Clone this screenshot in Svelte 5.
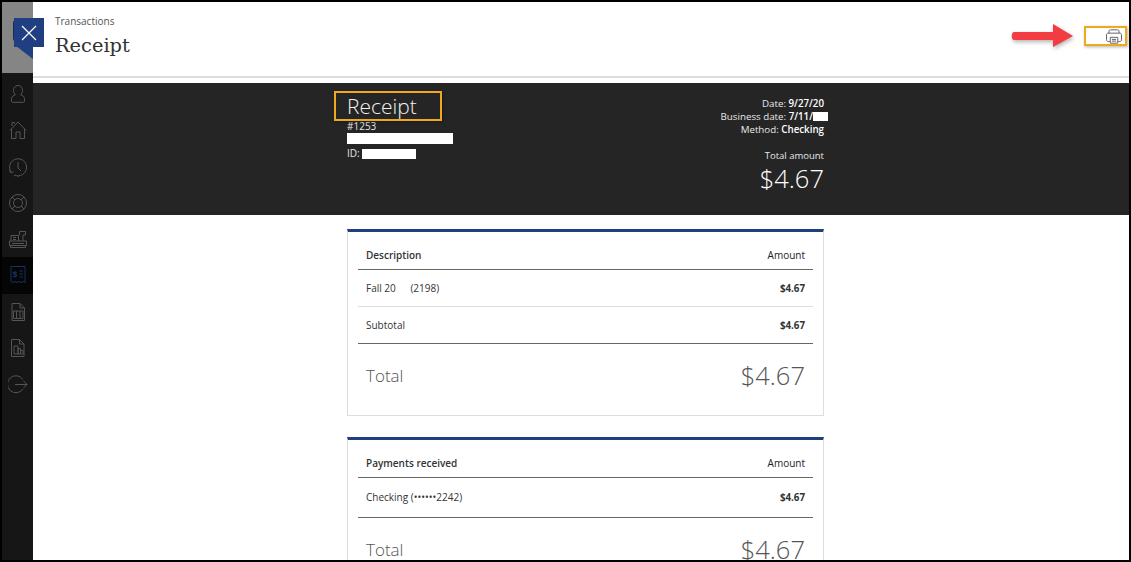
<script>
	const nav = ['user', 'home', 'clock', 'ring', 'register', 'bill', 'calc', 'report', 'exit']
</script>

<div class="frame">
	<aside class="rail">
		<div class="rail-top"></div>
		<ul>
			{#each nav as item}
				<li class:active={item === 'bill'}>
					<svg viewBox="0 0 20 20" width="20" height="20" fill="none" stroke="currentColor" stroke-width="1">
						{#if item === 'user'}
							<path d="M10 1.500c-3 0-4.500 2.200-4.500 4.800 0 2 .8 3.500 2 4.500-2 .7-4 1.500-4 4v2.500c0 .6.400 1 1 1h11c.6 0 1-.4 1-1v-2.500c0-2.500-2-3.300-4-4 1.200-1 2-2.500 2-4.500 0-2.600-1.500-4.800-4.500-4.800z" />
						{:else if item === 'home'}
							<path d="M2 10.500 10 2l8 8.500M3.500 9v9.500h4.500V12h4v6.500h4.500V9M4 6V2.500h2.500v1" />
						{:else if item === 'clock'}
							<path d="M3 15a8.500 8.500 0 1 1 3.500 3" />
							<path d="M10 5v6l3 3M6 18.500l1 .5M9.500 19.500h1" />
							<path d="M1.500 13.500 3 16l2.500-1.500" />
						{:else if item === 'ring'}
							<circle cx="10" cy="10" r="8.500" />
							<circle cx="10" cy="10" r="4.500" />
							<path d="m4 4 3 3M16 4l-3 3M4 16l3-3M16 16l-3-3" />
						{:else if item === 'register'}
							<path d="M3 12V6.500h7.500V12M11.500 6V2.500h6V6h-2.500v6M1.500 12h17v4.500h-17zM2.500 16.500v2h15v-2M5 8.500h3M5 10.500h3M4 14.500h12" />
						{:else if item === 'bill'}
							<path d="M3 1.500h14v16l-2-1-2 1-2-1-2 1-2-1-2 1-2-1z" />
							<path d="M11.500 6H15M11.500 9H15M11.500 12H15" />
							<text x="4.500" y="13" class="dollar">$</text>
						{:else if item === 'calc'}
							<path d="M4 1.500h8l4.500 4.500v12.500H4zM12 1.500V6h4.500M5.500 9h9.500v7.500H5.500zM8.500 9v7.500M12 9v7.500" />
						{:else if item === 'report'}
							<path d="M3.500 1.500h8l4.500 4.500v12.500h-12.500zM11.500 1.500V6H16M6 8h4v8H6zM10 10.500h2.500V16H10zM12.500 12.500H15V16h-2.500z" />
						{:else}
							<path d="M15 5.500A8.500 8.500 0 1 0 15 15" />
							<path d="M7 10.500h12M15.500 7l3.500 3.500-3.500 3.500" />
						{/if}
					</svg>
				</li>
			{/each}
		</ul>
	</aside>

	<main>
		<header class="top">
			<div class="crumb">Transactions</div>
			<h1>Receipt</h1>
		</header>
		<div class="rule"></div>

		<section class="banner">
			<div class="column banner-row">
				<div class="left">
					<h2>Receipt</h2>
					<div class="num">#1253</div>
					<div class="mask wide"></div>
					<div class="id">ID: <span class="mask short"></span></div>
				</div>
				<div class="right">
					<div>Date: <b>9/27/20</b></div>
					<div>Business date: <b>7/11/</b><span class="mask year"></span></div>
					<div>Method: <b>Checking</b></div>
					<div class="total-label">Total amount</div>
					<div class="total-value">$4.67</div>
				</div>
			</div>
		</section>

		<div class="column cards">
			<section class="card">
				<div class="row head"><span>Description</span><span class="amount-head">Amount</span></div>
				<div class="row item"><span class="semi">Fall 20 <i class="gap"></i>(2198)</span><b>$4.67</b></div>
				<div class="row sub"><span>Subtotal</span><b>$4.67</b></div>
				<div class="row grand"><span>Total</span><span class="big">$4.67</span></div>
			</section>

			<section class="card">
				<div class="row head"><span>Payments received</span><span class="amount-head">Amount</span></div>
				<div class="row item pay"><span>Checking (••••••2242)</span><b>$4.67</b></div>
				<div class="row grand"><span>Total</span><span class="big">$4.67</span></div>
			</section>
		</div>
	</main>

	<!-- annotations and close button lie over the page -->
	<div class="shield-back"></div>
	<div class="shield"></div>
	<button class="close" aria-label="Close">
		<svg viewBox="0 0 20 20" width="20" height="20" stroke="#fff" stroke-width="1.200"><path d="M3 3l14 14M17 3 3 17" /></svg>
	</button>
	<div class="mark mark-title"></div>
	<div class="mark mark-print">
		<svg viewBox="0 0 20 18" width="18" height="15" fill="none" stroke="#666" stroke-width="1.200">
			<path d="M4 5V2.500C4 1.500 5 1 6 1h8c1 0 2 .5 2 1.500V5" />
			<path d="M5 15H3c-1.200 0-2-.8-2-2V7c0-1.200.8-2 2-2h14c1.200 0 2 .8 2 2v6c0 1.200-.8 2-2 2h-2" />
			<path d="M5.500 10h9v7h-9zM7.500 12.500h5M7.500 14.500h5" />
		</svg>
	</div>
	<svg class="arrow" viewBox="0 0 64 26" width="64" height="26">
		<path d="M3 9h39V1l20 12-20 11v-7H3c-3 0-3-8 0-8z" fill="#f33c42" />
	</svg>
</div>

<style>
	:global(body) {
		margin: 0;
		background: #fff;
	}
	.frame {
		position: relative;
		box-sizing: border-box;
		width: 1131px;
		height: 562px;
		border: 2px solid #000;
		display: flex;
		overflow: hidden;
		font-family: "Open Sans", "Liberation Sans", sans-serif;
		color: #333;
	}
	.rail {
		width: 31px;
		flex: none;
		background: #161616;
	}
	.rail-top {
		height: 71px;
		background: #858585;
	}
	.rail ul {
		list-style: none;
		margin: 0;
		padding: 3px 0 0;
	}
	.rail li {
		height: 36.250px;
		display: flex;
		align-items: center;
		justify-content: center;
		color: #555;
	}
	.rail li.active {
		background: #050505;
		color: #1a3060;
	}
	.dollar {
		font: 700 9px "Open Sans", sans-serif;
		fill: currentColor;
		stroke: none;
	}
	main {
		flex: 1;
		min-width: 0;
		overflow: hidden;
	}
	.top {
		height: 74px;
		box-sizing: border-box;
		padding: 12px 0 0 22px;
	}
	.crumb {
		font-size: 10px;
		line-height: 14px;
		color: #555;
	}
	h1 {
		margin: 5px 0 0;
		font: 400 19.400px/26px "DejaVu Serif", serif;
		color: #333;
	}
	.rule {
		height: 7px;
		border-top: 2px solid #ddd;
		box-sizing: border-box;
	}
	.column {
		width: 477px;
		margin-left: 314px;
	}
	.banner {
		height: 132px;
		background: #252525;
		color: #e8e8e8;
	}
	.banner-row {
		display: flex;
		justify-content: space-between;
	}
	h2 {
		margin: 0;
		font: 300 21px/28px "Open Sans", sans-serif;
		color: #f2f2f2;
		padding-top: 9px;
	}
	.left {
		font-size: 10px;
	}
	.num {
		line-height: 12px;
	}
	.mask {
		display: inline-block;
		background: #fff;
	}
	.mask.wide {
		display: block;
		width: 106px;
		height: 11px;
		margin-top: 1px;
	}
	.id {
		margin-top: 2px;
		line-height: 14px;
	}
	.mask.short {
		width: 54px;
		height: 10px;
		vertical-align: -2px;
	}
	.mask.year {
		width: 15px;
		height: 9px;
		vertical-align: -1px;
		margin-right: -4px;
	}
	.right {
		text-align: right;
		font-size: 9.750px;
		line-height: 13px;
		padding-top: 14px;
	}
	.right b {
		font-weight: 600;
		color: #fff;
	}
	.total-label {
		margin-top: 13px;
		font-size: 9.500px;
	}
	.total-value {
		font-size: 25.500px;
		font-weight: 300;
		line-height: 36px;
		margin-top: -2px;
		color: #fff;
	}
	.cards {
		padding-top: 14px;
	}
	.card {
		box-sizing: border-box;
		height: 187px;
		border: 1px solid #ddd;
		border-top: 3px solid #1f3f82;
		padding: 0 10px;
		margin-bottom: 21px;
		font-size: 10px;
	}
	.row {
		display: flex;
		justify-content: space-between;
		align-items: center;
		padding: 0 8px;
		color: #333;
	}
	.row b {
		font-weight: 700;
		font-size: 9.750px;
	}
	.head {
		height: 29px;
		padding-top: 8px;
		font-weight: 600;
		border-bottom: 1px solid #666;
	}
	.amount-head {
		font-weight: 400;
		color: #222;
	}
	.item {
		height: 36px;
		border-bottom: 1px solid #ddd;
	}
	.item.pay {
		height: 38px;
		padding-bottom: 1px;
		border-bottom-color: #666;
	}
	.semi {
		font-weight: 500;
	}
	.gap {
		display: inline-block;
		width: 12px;
	}
	.sub {
		height: 36px;
		border-bottom: 1px solid #666;
		font-weight: 500;
	}
	.grand {
		height: 62px;
		font-size: 17px;
		font-weight: 300;
		color: #555;
	}
	.big {
		font-size: 25.500px;
	}
	.close {
		position: absolute;
		left: 12px;
		top: 16px;
		width: 30px;
		height: 29px;
		padding: 0;
		border: 0;
		background: #1f3f82;
		display: flex;
		align-items: center;
		justify-content: center;
	}
	.shield {
		position: absolute;
		left: 14px;
		top: 44px;
		width: 17px;
		height: 13px;
		background: #1f3f82;
		clip-path: polygon(0 0, 100% 0, 100% 100%);
	}
	.shield-back {
		position: absolute;
		left: 11px;
		top: 18px;
		width: 5px;
		height: 22px;
		background: #1c2a45;
		border-radius: 3px 0 0 4px;
	}
	.mark {
		position: absolute;
		box-sizing: border-box;
		border: 2px solid #f0a81c;
		box-shadow: 1px 1px 3px rgba(0, 0, 0, 0.300);
	}
	.mark-title {
		left: 332px;
		top: 89px;
		width: 108px;
		height: 30px;
	}
	.mark-print {
		left: 1082px;
		top: 24px;
		width: 43px;
		height: 20px;
		display: flex;
		justify-content: flex-end;
		align-items: center;
		padding-right: 2px;
	}
	.arrow {
		position: absolute;
		left: 1009px;
		top: 21px;
		filter: drop-shadow(1px 2px 2px rgba(0, 0, 0, 0.300));
	}
</style>
